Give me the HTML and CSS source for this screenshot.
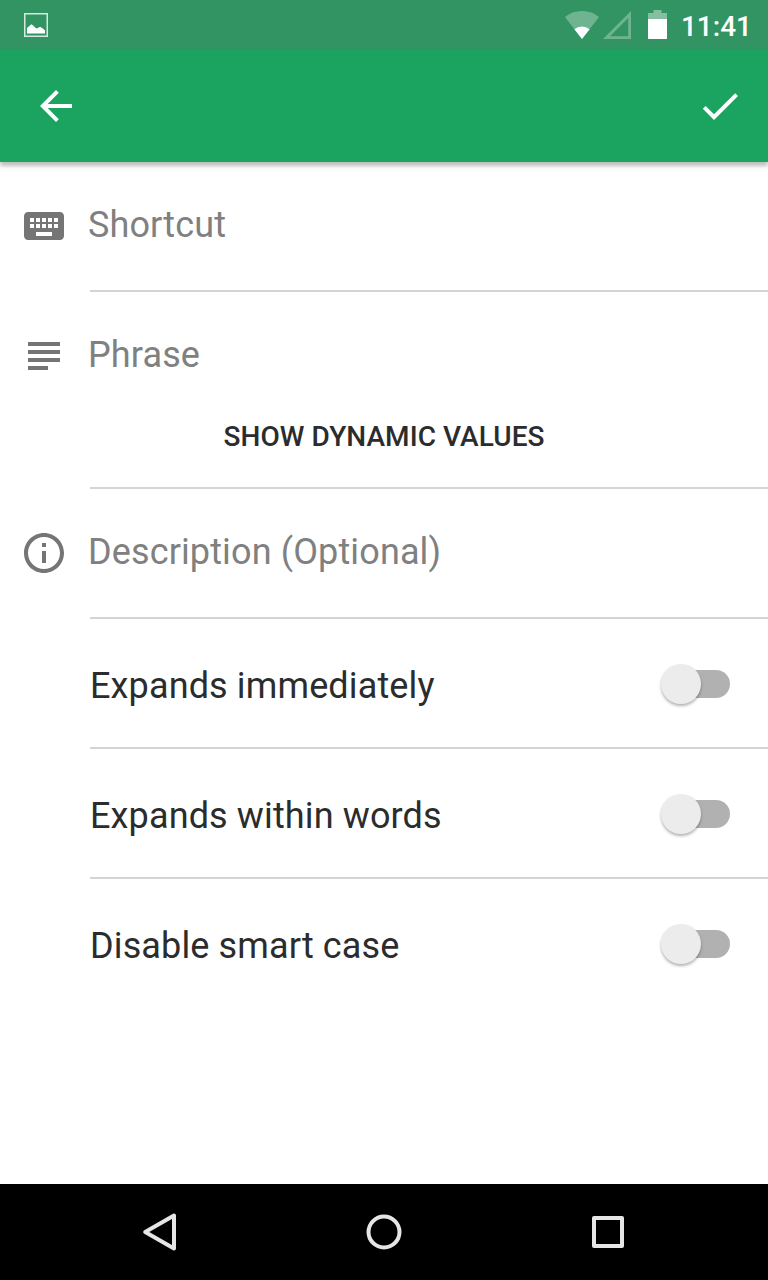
FILE: index.html
```html
<!DOCTYPE html>
<html lang="en">
<head>
    <meta charset="UTF-8">
    <meta name="viewport" content="width=device-width, initial-scale=1.0">
    <title>Edit Shortcut</title>
    <link rel="stylesheet" href="styles.css">
</head>
<body>
    <div class="status-bar">
        <svg class="status-image" width="24" height="24" viewBox="0 0 24 24">
            <rect x="0.75" y="0.75" width="22.5" height="22.5" fill="none" stroke="#d5e9df" stroke-width="1.5"/>
            <path d="M3 20.5V15l3.5-3 1-0.7 1 0.7 3.3 3 1.2 0.5 2-1.2 1.5-0.2 3 2 1.5 1.5v2.9z" fill="#fff"/>
        </svg>
        <div class="status-icons">
            <svg class="wifi" width="34" height="28" viewBox="0 0 34 28">
                <path d="M17 28L0 6Q7 0 17 0t17 6z" fill="#fff" fill-opacity="0.3"/>
                <path d="M17 28L9.4 18.2Q12.5 15.6 17 15.6t7.6 2.6z" fill="#fff"/>
            </svg>
            <svg class="signal" width="28" height="28" viewBox="0 0 28 28">
                <path d="M28 0v28H0zM25.2 7L7 25.2h18.2z" fill="#fff" fill-opacity="0.3" fill-rule="evenodd"/>
            </svg>
            <svg class="battery" width="19" height="29" viewBox="0 0 19 29">
                <path d="M5.5 0h8v3H19v6H0V3h5.5z" fill="#fff" fill-opacity="0.4"/>
                <path d="M0 9h19v20H0z" fill="#fff"/>
            </svg>
            <span class="clock">11:41</span>
        </div>
    </div>
    <header class="toolbar">
        <svg width="48" height="48" viewBox="0 0 24 24" fill="#fff">
            <path d="M20 11H7.83l5.59-5.59L12 4l-8 8 8 8 1.41-1.41L7.83 13H20v-2z"/>
        </svg>
        <svg width="48" height="48" viewBox="0 0 24 24" fill="#fff">
            <path d="M9 16.17L4.83 12l-1.42 1.41L9 19 21 7l-1.41-1.41z"/>
        </svg>
    </header>
    <main class="form">
        <div class="row">
            <svg class="row-icon" viewBox="0 0 24 24">
                <path d="M20 5H4c-1.1 0-1.99.9-1.99 2L2 17c0 1.1.9 2 2 2h16c1.1 0 2-.9 2-2V7c0-1.1-.9-2-2-2zm-9 3h2v2h-2V8zm0 3h2v2h-2v-2zM8 8h2v2H8V8zm0 3h2v2H8v-2zm-1 2H5v-2h2v2zm0-3H5V8h2v2zm9 7H8v-2h8v2zm0-4h-2v-2h2v2zm0-3h-2V8h2v2zm3 3h-2v-2h2v2zm0-3h-2V8h2v2z"/>
            </svg>
            <div class="row-body">
                <div class="field">Shortcut</div>
            </div>
        </div>
        <div class="row">
            <svg class="row-icon" viewBox="0 0 24 24">
                <path d="M4 5h16v2H4zM4 9h16v2H4zM4 13h16v2H4zM4 17h10v2H4z"/>
            </svg>
            <div class="row-body phrase">
                <div class="field">Phrase</div>
                <div class="dynamic-button">SHOW DYNAMIC VALUES</div>
            </div>
        </div>
        <div class="row">
            <svg class="row-icon" viewBox="0 0 24 24">
                <path d="M11 17h2v-6h-2v6zm1-15C6.48 2 2 6.48 2 12s4.48 10 10 10 10-4.48 10-10S17.52 2 12 2zm0 18c-4.41 0-8-3.59-8-8s3.59-8 8-8 8 3.59 8 8-3.59 8-8 8zM11 9h2V7h-2v2z"/>
            </svg>
            <div class="row-body">
                <div class="field">Description (Optional)</div>
            </div>
        </div>
        <div class="row">
            <div class="row-body option">
                <span class="option-label">Expands immediately</span>
                <span class="switch"><span class="thumb"></span></span>
            </div>
        </div>
        <div class="row">
            <div class="row-body option">
                <span class="option-label">Expands within words</span>
                <span class="switch"><span class="thumb"></span></span>
            </div>
        </div>
        <div class="row">
            <div class="row-body option last">
                <span class="option-label">Disable smart case</span>
                <span class="switch"><span class="thumb"></span></span>
            </div>
        </div>
    </main>
    <nav class="nav-bar">
        <svg width="48" height="48" viewBox="0 0 48 48">
            <path d="M38 7.5v33L9.2 24z"/>
        </svg>
        <svg width="48" height="48" viewBox="0 0 48 48">
            <circle cx="24" cy="24" r="15.5"/>
        </svg>
        <svg width="48" height="48" viewBox="0 0 48 48">
            <rect x="10" y="10" width="28" height="28"/>
        </svg>
    </nav>
</body>
</html>
```
FILE: styles.css
```css
body {
    margin: 0;
    height: 1280px;
    display: flex;
    flex-direction: column;
    font-family: Roboto, sans-serif;
    background-color: #fff;
    color: #2b2c2d;
}
svg {
    display: block;
    flex: none;
}
.status-bar {
    height: 50px;
    padding: 0 16px 0 24px;
    display: flex;
    align-items: center;
    justify-content: space-between;
    background-color: #319462;
}
.status-icons {
    display: flex;
    align-items: center;
}
.signal {
    margin-left: 4px;
}
.battery {
    margin: 0 0 2px 17px;
}
.clock {
    margin-left: 14px;
    padding-top: 3px;
    color: #fff;
    font-size: 28px;
    font-weight: 500;
    line-height: 32px;
}
.toolbar {
    height: 112px;
    box-sizing: border-box;
    padding: 0 24px 0 32px;
    display: flex;
    align-items: center;
    justify-content: space-between;
    background-color: #1ba360;
    box-shadow: 0 4px 4px rgba(0,0,0,0.26);
}
.form {
    flex: 1;
}
.row {
    display: flex;
}
.row-icon {
    width: 48px;
    height: 48px;
    margin: 40px 22px 0 20px;
    fill: #757575;
}
.row-body {
    flex: 1;
    height: 128px;
    border-bottom: 2px solid #d4d4d4;
}
.field {
    margin-left: -2px;
    padding-top: 42px;
    font-size: 36px;
    line-height: 42px;
    letter-spacing: 0.13px;
    color: #808080;
}
.phrase {
    height: 195px;
}
.dynamic-button {
    margin: 43px 0 0 -90px;
    text-align: center;
    font-size: 28px;
    font-weight: 500;
    line-height: 36px;
    letter-spacing: 0.05px;
}
.option {
    display: flex;
    align-items: center;
    justify-content: space-between;
    margin-left: 90px;
}
.option-label {
    padding-top: 5px;
    font-size: 36px;
    line-height: 42px;
    letter-spacing: 0.13px;
}
.switch {
    width: 68px;
    height: 28px;
    margin: 2px 38px 0 0;
    display: flex;
    align-items: center;
    border-radius: 14px;
    background-color: #b1b1b1;
}
.thumb {
    width: 40px;
    height: 40px;
    margin-left: -1px;
    border-radius: 50%;
    background-color: #ececec;
    box-shadow: 0 2px 3px rgba(0,0,0,0.3);
}
.last {
    border-bottom: none;
}
.nav-bar {
    height: 96px;
    display: flex;
    align-items: center;
    justify-content: center;
    gap: 176px;
    background-color: #000;
}
.nav-bar svg {
    fill: none;
    stroke: #e6e6e6;
    stroke-width: 4;
    stroke-linejoin: round;
}
```
